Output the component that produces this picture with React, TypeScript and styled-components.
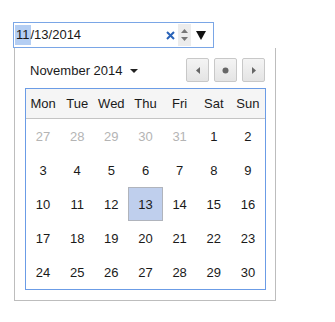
import styled, { createGlobalStyle } from 'styled-components';

const GlobalStyle = createGlobalStyle`
    body {
        margin: 0;
        background: #ffffff;
        font-family: "Liberation Sans", Arial, sans-serif;
    }
`;

const weekDays = ['Mon', 'Tue', 'Wed', 'Thu', 'Fri', 'Sat', 'Sun'];

// 11월 달력 (앞쪽 10월 날짜 포함)
const days: { n: number; other?: boolean }[] = [
    { n: 27, other: true },
    { n: 28, other: true },
    { n: 29, other: true },
    { n: 30, other: true },
    { n: 31, other: true },
    ...Array.from({ length: 30 }, (_, i) => ({ n: i + 1 })),
];

const App = () => {
    return (
        <Page>
            <GlobalStyle />
            <DateInput>
                <Value>
                    <Selected>11</Selected>/13/2014
                </Value>
                <Clear>
                    <svg width="9" height="9" viewBox="0 0 9 9">
                        <path d="M1 1 L8 8 M8 1 L1 8" stroke="#2a63b8" strokeWidth="2" />
                    </svg>
                </Clear>
                <Spinner>
                    <svg width="9" height="14" viewBox="0 0 9 14">
                        <path d="M4.5 1 L8 5 H1 Z" fill="#777" />
                        <path d="M4.5 13 L8 9 H1 Z" fill="#777" />
                    </svg>
                </Spinner>
                <DropDown>
                    <svg width="10" height="9" viewBox="0 0 10 9">
                        <path d="M0 0 H10 L5 9 Z" fill="#111" />
                    </svg>
                </DropDown>
            </DateInput>
            <Popup>
                <MonthBar>
                    <MonthLabel>
                        November 2014
                        <svg width="8" height="4" viewBox="0 0 8 4">
                            <path d="M0 0 H8 L4 4 Z" fill="#222" />
                        </svg>
                    </MonthLabel>
                    <NavButtons>
                        <NavBtn>
                            <svg width="4" height="7" viewBox="0 0 4 7">
                                <path d="M4 0 V7 L0 3.5 Z" fill="#666" />
                            </svg>
                        </NavBtn>
                        <NavBtn>
                            <svg width="7" height="7" viewBox="0 0 7 7">
                                <circle cx="3.5" cy="3.5" r="3" fill="#666" />
                            </svg>
                        </NavBtn>
                        <NavBtn>
                            <svg width="4" height="7" viewBox="0 0 4 7">
                                <path d="M0 0 V7 L4 3.5 Z" fill="#666" />
                            </svg>
                        </NavBtn>
                    </NavButtons>
                </MonthBar>
                <Calendar>
                    <WeekHeader>
                        {weekDays.map((d) => (
                            <WeekDay key={d}>{d}</WeekDay>
                        ))}
                    </WeekHeader>
                    <DayGrid>
                        {days.map((d, i) => (
                            <Day key={i} $other={d.other} $selected={!d.other && d.n === 13}>
                                {d.n}
                            </Day>
                        ))}
                    </DayGrid>
                </Calendar>
            </Popup>
        </Page>
    );
};

export default App;

const Page = styled.div`
    padding: 22px 0 0 13px;
`;

const DateInput = styled.div`
    display: flex;
    align-items: center;
    width: 201px;
    height: 26px;
    box-sizing: border-box;
    border: 1px solid #7aa6e6;
    padding: 0 4px 0 1px;
    background: #fff;
`;

const Value = styled.div`
    flex-grow: 1;
    font-size: 13px;
    color: #1a1a1a;
    line-height: 20px;
`;

const Selected = styled.span`
    display: inline-block;
    background: #b4cef3;
    padding: 0 1px;
`;

const Clear = styled.div`
    display: flex;
    width: 12px;
    justify-content: center;
    margin-right: 1px;
`;

const Spinner = styled.div`
    display: flex;
    align-items: center;
    justify-content: center;
    width: 13px;
    height: 22px;
    background: #ececec;
    margin-left: 1px;
`;

const DropDown = styled.div`
    display: flex;
    justify-content: center;
    width: 16px;
    margin-left: 2px;
`;

const Popup = styled.div`
    margin-left: 1px;
    width: 262px;
    height: 253px;
    box-sizing: border-box;
    border: 1px solid #bdbdbd;
    border-top: none;
    padding: 10px 10px 0 10px;
    background: #fff;
`;

const MonthBar = styled.div`
    display: flex;
    align-items: center;
    justify-content: space-between;
    height: 24px;
    margin-bottom: 6px;
`;

const MonthLabel = styled.div`
    display: flex;
    align-items: center;
    gap: 7px;
    padding-left: 5px;
    font-size: 13px;
    color: #1a1a1a;

    svg {
        margin-top: 1px;
    }
`;

const NavButtons = styled.div`
    display: flex;
    gap: 5px;
    margin-right: 0;
`;

const NavBtn = styled.div`
    display: flex;
    align-items: center;
    justify-content: center;
    width: 23px;
    height: 24px;
    box-sizing: border-box;
    border: 1px solid #c8c8c8;
    border-radius: 2px;
    background: linear-gradient(#f4f4f4, #e4e4e4);
`;

const Calendar = styled.div`
    width: 241px;
    box-sizing: border-box;
    border: 1px solid #6b9ce6;
`;

const WeekHeader = styled.div`
    display: grid;
    grid-template-columns: repeat(7, 1fr);
    height: 29px;
    background: #f5f5f5;
    border-bottom: 1px solid #c4c4c4;
`;

const WeekDay = styled.div`
    display: flex;
    align-items: center;
    justify-content: center;
    font-size: 13px;
    color: #1a1a1a;
`;

const DayGrid = styled.div`
    display: grid;
    grid-template-columns: repeat(7, 1fr);
    grid-auto-rows: 34px;
`;

const Day = styled.div<{ $other?: boolean; $selected?: boolean }>`
    display: flex;
    align-items: center;
    justify-content: center;
    box-sizing: border-box;
    font-size: 13px;
    color: ${({ $other }) => ($other ? '#b4b4b4' : '#1a1a1a')};
    background: ${({ $selected }) => ($selected ? '#bfcfed' : 'transparent')};
    border: 1px solid ${({ $selected }) => ($selected ? '#b0b4bc' : 'transparent')};
`;
